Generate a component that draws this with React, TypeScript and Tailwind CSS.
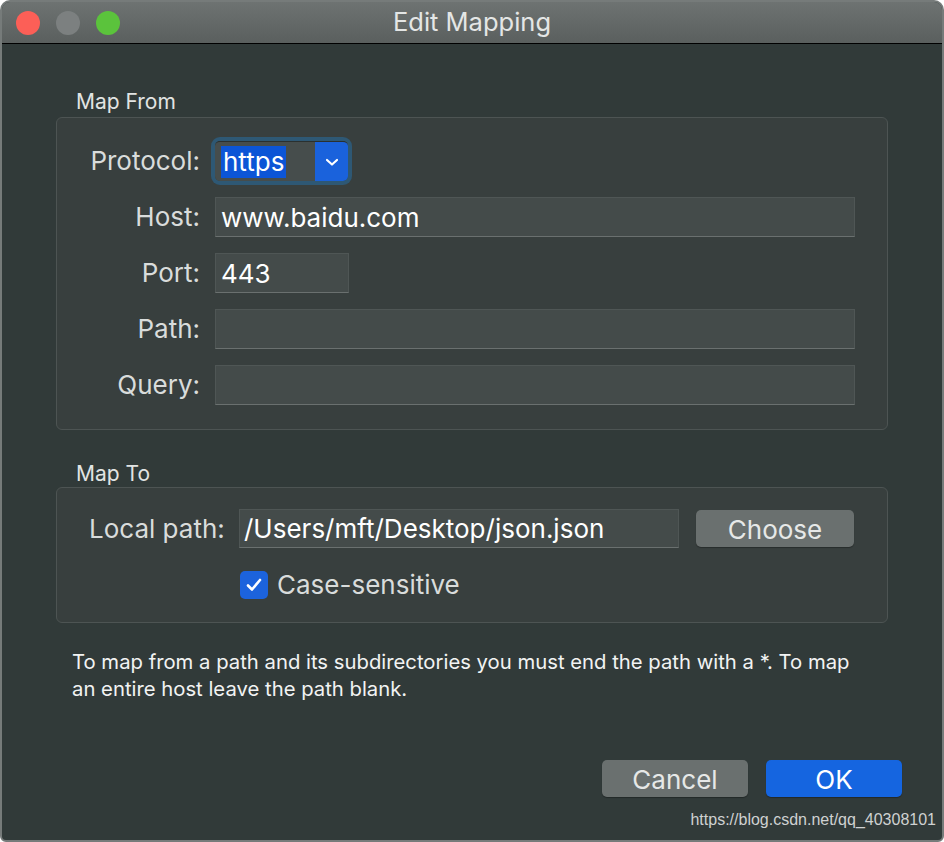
import React from 'react';

const font = { fontFamily: 'Inter, "Noto Sans", sans-serif' };

const Field = ({ label, value, width }: { label: string; value?: string; width: string }) => (
  <>
    <div className="text-right text-[26px] text-[#d9dcdb] leading-none">{label}</div>
    <div
      className={`${width} h-[40px] bg-[#444b4a] border border-[#4f5655] border-b-[#6a706f] px-[5px] flex items-center text-[26px] text-white`}
    >
      {value}
    </div>
  </>
);

const App = () => {
  return (
    <div className="w-[944px] h-[842px] bg-white" style={font}>
      <div className="relative w-full h-full flex flex-col bg-[#313a39] rounded-t-[10px] rounded-b-[6px] border-2 border-[#767b7a] overflow-hidden">
        {/* title bar */}
        <div className="h-[42px] flex items-center relative bg-gradient-to-b from-[#6e7372] to-[#5a5f5e] border-b border-black shrink-0">
          <div className="flex gap-[16px] pl-[14px]">
            <span className="w-[24px] h-[24px] rounded-full bg-[#fc5f57]" />
            <span className="w-[24px] h-[24px] rounded-full bg-[#7c8080]" />
            <span className="w-[24px] h-[24px] rounded-full bg-[#5bc33c]" />
          </div>
          <div className="absolute inset-0 flex items-center justify-center text-[25.5px] text-[#e4e6e5]">
            Edit Mapping
          </div>
        </div>

        <div className="flex flex-col pl-[54px] pr-[54px]">
          <div className="pl-[20px] pt-[47px] text-[21px] text-[#e2e4e3] leading-none h-[73px]">Map From</div>
          <div className="h-[313px] rounded-[6px] bg-[#383f3e] border border-[#4d5453] pt-[23px] pr-[32px]">
            <div className="grid grid-cols-[143px_1fr] gap-x-[15px] gap-y-[16px] items-center">
              <div className="text-right text-[26px] text-[#d9dcdb] leading-none">Protocol:</div>
              <div className="w-[133px] h-[40px] rounded-[5px] shadow-[0_0_0_4px_#2e5874] flex overflow-hidden border-t border-[#2a302f]">
                <div className="flex-1 bg-[#464d4c] flex items-center pl-[6px]">
                  <span className="bg-[#0c55d6] text-white text-[26px] leading-[32px] px-[2px]">https</span>
                </div>
                <div className="w-[33px] bg-[#1a62dc] flex items-center justify-center">
                  <svg width="16" height="12" viewBox="0 0 16 12">
                    <path d="M3 4 L8 8.5 L13 4" fill="none" stroke="white" strokeWidth="2.2" strokeLinecap="round" strokeLinejoin="round" />
                  </svg>
                </div>
              </div>
              <Field label="Host:" value="www.baidu.com" width="w-full" />
              <Field label="Port:" value="443" width="w-[134px]" />
              <Field label="Path:" width="w-full" />
              <Field label="Query:" width="w-full" />
            </div>
          </div>

          <div className="pl-[20px] pt-[33px] text-[21px] text-[#e2e4e3] leading-none h-[57px]">Map To</div>
          <div className="h-[136px] rounded-[6px] bg-[#383f3e] border border-[#4d5453] pt-[21px] pl-[32px] pr-[32px]">
            <div className="flex items-center">
              <div className="text-[26px] text-[#d9dcdb] leading-none w-[150px]">Local path:</div>
              <div className="w-[440px] h-[39px] bg-[#444b4a] border border-[#4f5655] border-b-[#6a706f] px-[4px] flex items-center text-[26px] text-white">
                /Users/mft/Desktop/json.json
              </div>
              <button className="ml-[17px] w-[158px] h-[37px] rounded-[5px] bg-[#6a706f] text-[26px] text-[#e6e8e7] shadow-[0_1px_1px_rgba(0,0,0,0.3)]">
                Choose
              </button>
            </div>
            <div className="flex items-center mt-[23px] ml-[151px]">
              <span className="w-[28px] h-[28px] rounded-[5px] bg-[#1c63dd] flex items-center justify-center">
                <svg width="18" height="16" viewBox="0 0 18 16">
                  <path d="M3 8.5 L7 12.5 L15 3" fill="none" stroke="white" strokeWidth="2.6" strokeLinecap="round" strokeLinejoin="round" />
                </svg>
              </span>
              <span className="ml-[9px] text-[26px] text-[#d9dcdb] leading-none">Case-sensitive</span>
            </div>
          </div>

          <p className="mt-[25px] ml-[16px] text-[20.3px] leading-[27px] text-[#f2f3f3] w-[800px]">
            To map from a path and its subdirectories you must end the path with a *. To map an entire host leave the path blank.
          </p>
        </div>

        <div className="mt-auto mb-[43px] flex justify-end gap-[18px] pr-[40px]">
          <button className="w-[146px] h-[37px] rounded-[5px] bg-[#6a706f] text-[26px] text-[#e6e8e7] shadow-[0_1px_1px_rgba(0,0,0,0.3)]">
            Cancel
          </button>
          <button className="w-[136px] h-[37px] rounded-[5px] bg-[#1565e0] text-[26px] text-white shadow-[0_1px_1px_rgba(0,0,0,0.3)]">
            OK
          </button>
        </div>

        <div
          className="absolute right-[6px] bottom-[8px] text-[16px] text-[#cfd1d1]"
          style={{ fontFamily: '"Liberation Sans", Arial, sans-serif' }}
        >
          https://blog.csdn.net/qq_40308101
        </div>
      </div>
    </div>
  );
};

export default App;
